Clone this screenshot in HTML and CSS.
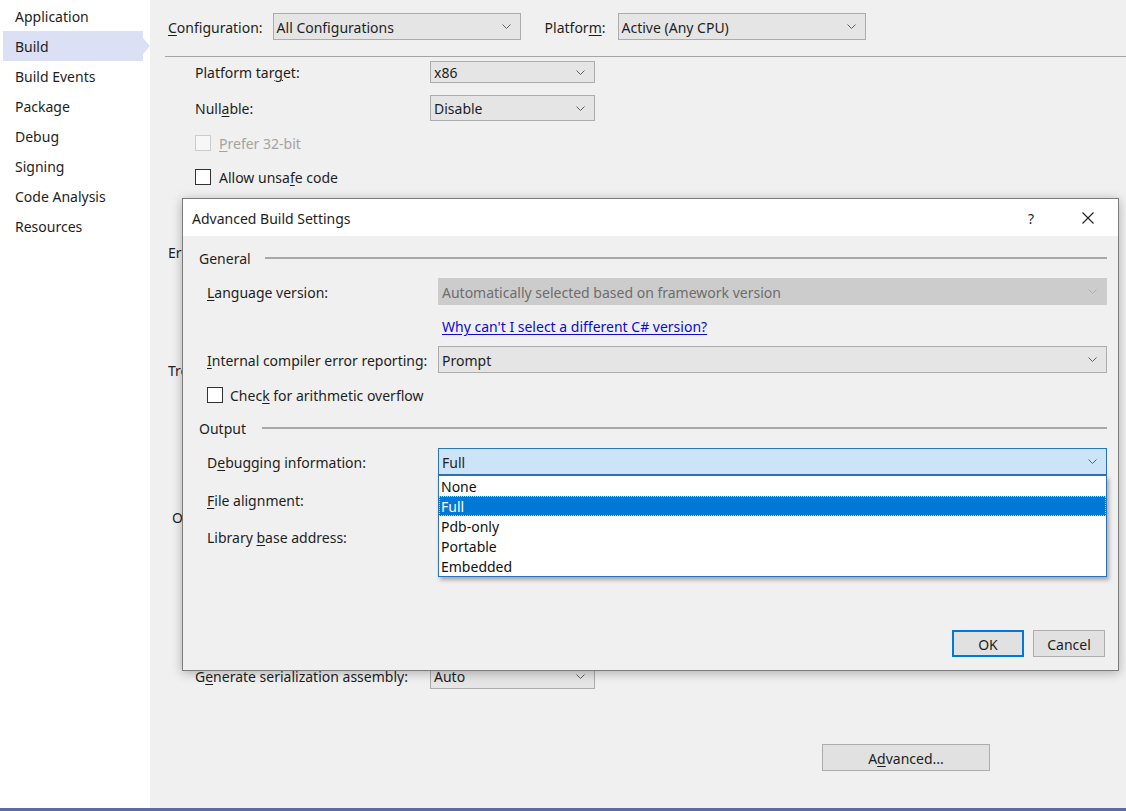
FILE: index.html
```html
<!DOCTYPE html>
<html>
<head>
<meta charset="utf-8">
<title>Build</title>
<link rel="stylesheet" href="styles.css">
</head>
<body>
<div class="app">
  <nav class="sidebar">
    <div class="nav-item">Application</div>
    <div class="nav-item active">Build</div>
    <div class="nav-item">Build Events</div>
    <div class="nav-item">Package</div>
    <div class="nav-item">Debug</div>
    <div class="nav-item">Signing</div>
    <div class="nav-item">Code Analysis</div>
    <div class="nav-item">Resources</div>
  </nav>

  <main class="main">
    <div class="config-bar">
      <span class="lbl txt"><u>C</u>onfiguration:</span>
      <div class="combo combo-config"><span class="combo-text txt">All Configurations</span><svg class="chev" width="9" height="5" viewBox="0 0 9 5"><polyline points="0.5,0.5 4.5,4.5 8.5,0.5"/></svg></div>
      <span class="lbl lbl-platform txt">Platfor<u>m</u>:</span>
      <div class="combo combo-platform"><span class="combo-text txt">Active (Any CPU)</span><svg class="chev" width="9" height="5" viewBox="0 0 9 5"><polyline points="0.5,0.5 4.5,4.5 8.5,0.5"/></svg></div>
    </div>
    <div class="rule"></div>

    <div class="settings">
      <div class="row row-target">
        <span class="row-label txt">Platform tar<u>g</u>et:</span>
        <div class="combo combo-small combo-short"><span class="combo-text txt">x86</span><svg class="chev" width="9" height="5" viewBox="0 0 9 5"><polyline points="0.5,0.5 4.5,4.5 8.5,0.5"/></svg></div>
      </div>
      <div class="row row-nullable">
        <span class="row-label txt">Null<u>a</u>ble:</span>
        <div class="combo combo-small"><span class="combo-text txt">Disable</span><svg class="chev" width="9" height="5" viewBox="0 0 9 5"><polyline points="0.5,0.5 4.5,4.5 8.5,0.5"/></svg></div>
      </div>
      <div class="row row-check disabled">
        <span class="checkbox"></span><span class="txt"><u>P</u>refer 32-bit</span>
      </div>
      <div class="row row-check">
        <span class="checkbox"></span><span class="txt">Allow unsa<u>f</u>e code</span>
      </div>
      <div class="row row-hidden1 section-head"><span class="clip txt">Er</span></div>
      <div class="row row-hidden2 section-head"><span class="clip txt">Tre</span></div>
      <div class="row row-hidden3 section-head out-head"><span class="clip clip-o txt">O</span></div>
      <div class="row row-serial">
        <span class="row-label txt">G<u>e</u>nerate serialization assembly:</span>
        <div class="combo combo-small"><span class="combo-text txt">Auto</span><svg class="chev" width="9" height="5" viewBox="0 0 9 5"><polyline points="0.5,0.5 4.5,4.5 8.5,0.5"/></svg></div>
      </div>
      <div class="row row-advanced">
        <div class="button btn-advanced"><span class="txt">A<u>d</u>vanced...</span></div>
      </div>
    </div>

    <div class="dialog">
      <div class="dlg-title">
        <span class="dlg-title-text txt">Advanced Build Settings</span>
        <span class="dlg-help txt">?</span>
        <svg class="dlg-close" width="12" height="12" viewBox="0 0 12 12"><line x1="0.5" y1="0.5" x2="11.5" y2="11.5"/><line x1="11.5" y1="0.5" x2="0.5" y2="11.5"/></svg>
      </div>
      <div class="dlg-body">
        <div class="group-head"><span class="txt">General</span><span class="group-line"></span></div>
        <div class="frow frow-lang">
          <span class="frow-label txt"><u>L</u>anguage version:</span>
          <div class="combo combo-wide combo-disabled"><span class="combo-text txt">Automatically selected based on framework version</span><svg class="chev" width="9" height="5" viewBox="0 0 9 5"><polyline points="0.5,0.5 4.5,4.5 8.5,0.5"/></svg></div>
        </div>
        <div class="frow frow-link">
          <span class="frow-label"></span>
          <a class="link txt" href="#">Why can't I select a different C# version?</a>
        </div>
        <div class="frow frow-internal">
          <span class="frow-label txt"><u>I</u>nternal compiler error reporting:</span>
          <div class="combo combo-wide"><span class="combo-text txt">Prompt</span><svg class="chev" width="9" height="5" viewBox="0 0 9 5"><polyline points="0.5,0.5 4.5,4.5 8.5,0.5"/></svg></div>
        </div>
        <div class="frow frow-check">
          <span class="checkbox"></span><span class="txt">Chec<u>k</u> for arithmetic overflow</span>
        </div>
        <div class="group-head group-output"><span class="txt">Output</span><span class="group-line"></span></div>
        <div class="frow frow-debug">
          <span class="frow-label txt">D<u>e</u>bugging information:</span>
          <div class="combo combo-wide combo-focus"><span class="combo-text txt">Full</span><svg class="chev" width="9" height="5" viewBox="0 0 9 5"><polyline points="0.5,0.5 4.5,4.5 8.5,0.5"/></svg>
            <ul class="droplist">
              <li>None</li>
              <li class="selected">Full</li>
              <li>Pdb-only</li>
              <li>Portable</li>
              <li>Embedded</li>
            </ul>
          </div>
        </div>
        <div class="frow frow-text">
          <span class="frow-label txt"><u>F</u>ile alignment:</span>
        </div>
        <div class="frow frow-text">
          <span class="frow-label txt">Library <u>b</u>ase address:</span>
        </div>
        <div class="dlg-buttons">
          <div class="button btn-ok"><span class="txt">OK</span></div>
          <div class="button btn-cancel"><span class="txt">Cancel</span></div>
        </div>
      </div>
    </div>
  </main>
</div>
<div class="status-bar"></div>
</body>
</html>
```

FILE: styles.css
```css
* { box-sizing: border-box; }
html, body { margin: 0; padding: 0; height: 100%; }
body {
  font-family: "Noto Sans", "Open Sans", sans-serif;
  font-size: 14px;
  color: #1e1e1e;
  background: #f0f0f0;
  overflow: hidden;
}
u { text-decoration: underline; text-underline-offset: 2px; text-decoration-thickness: 1px; }

/* nudges glyphs 1px lower inside flex-centred rows */
.txt { line-height: 20px; padding-top: 2px; }

.app { display: flex; height: 808px; }

/* Sidebar */
.sidebar {
  width: 150px;
  flex-shrink: 0;
  background: #ffffff;
  padding-top: 1px;
}
.nav-item {
  height: 30px;
  line-height: 32px;
  margin-left: 3px;
  width: 140px;
  padding-left: 12px;
  position: relative;
  white-space: nowrap;
}
.nav-item.active { background: #dce0f5; }
.nav-item.active::after {
  content: "";
  position: absolute;
  right: -7px;
  top: 7px;
  border-left: 7px solid #dce0f5;
  border-top: 8px solid transparent;
  border-bottom: 8px solid transparent;
}

/* Main */
.main {
  flex: 1;
  position: relative;
  background: #f0f0f0;
}
.config-bar {
  display: flex;
  align-items: center;
  padding: 13px 0 0 18px;
  height: 40px;
}
.lbl { white-space: nowrap; }
.lbl-platform { margin-left: 24px; }

.combo {
  position: relative;
  display: flex;
  align-items: center;
  justify-content: space-between;
  height: 27px;
  background: #e5e5e5;
  border: 1px solid #acacac;
  padding: 0 9px 0 3px;
  white-space: nowrap;
}
.chev { flex-shrink: 0; }
.chev polyline { fill: none; stroke: #606060; stroke-width: 1; }

.combo-config { width: 248px; margin-left: 10px; }
.combo-platform { width: 248px; margin-left: 12px; }

.rule {
  margin: 16px 0 0 15px;
  height: 1px;
  background: #a5a5a5;
}

.settings { padding-left: 45px; }
.row { display: flex; align-items: center; white-space: nowrap; }
.row-label { width: 235px; }
.combo-small { width: 165px; height: 26px; }
.combo-short { height: 22px; }
.row-target { margin-top: 4px; height: 22px; }
.row-nullable { margin-top: 12px; height: 26px; }
.row-check { height: 24px; margin-top: 10px; }
.row-check .checkbox { margin-right: 8px; }
.disabled { color: #a3a3a3; }
.disabled .checkbox { border-color: #cccccc; background: #f7f7f7; }
.section-head { margin-left: -27px; height: 24px; }
.clip { display: block; width: 14px; overflow: hidden; white-space: nowrap; }
.clip-o { width: 10px; }
.row-hidden1 { margin-top: 51px; }
.row-hidden2 { margin-top: 94px; }
.row-hidden3 { margin-top: 123px; }
.out-head { margin-left: -23px; }
.row-serial { margin-top: 134px; height: 26px; }
.row-advanced { margin-top: 55px; padding-left: 627px; }

.checkbox {
  display: inline-block;
  width: 16px;
  height: 16px;
  border: 1px solid #333333;
  background: #ffffff;
  flex-shrink: 0;
}

.button {
  height: 27px;
  display: flex;
  align-items: center;
  justify-content: center;
  background: #e1e1e1;
  border: 1px solid #adadad;
}
.btn-advanced { width: 168px; }

/* Dialog */
.dialog {
  position: absolute;
  left: 32px;
  top: 198px;
  width: 937px;
  height: 473px;
  border: 1px solid #7c7c7c;
  background: #f0f0f0;
  box-shadow: 0 2px 10px rgba(0, 0, 0, 0.28);
  display: flex;
  flex-direction: column;
}
.dlg-title {
  height: 37px;
  background: #ffffff;
  display: flex;
  align-items: center;
  padding-left: 9px;
}
.dlg-title-text { flex: 1; }
.dlg-help { width: 56px; text-align: left; padding-left: 2px; }
.dlg-close { margin-right: 24px; }
.dlg-close line { stroke: #1e1e1e; stroke-width: 1.1; }

.dlg-body {
  flex: 1;
  display: flex;
  flex-direction: column;
  padding: 12px 11px 13px 16px;
}
.group-head {
  display: flex;
  align-items: center;
  height: 20px;
}
.group-line {
  flex: 1;
  height: 2px;
  background: #a8a8a8;
  margin-left: 14px;
}
.group-output { margin-top: 13px; }
.group-output .group-line { margin-left: 16px; }

.frow {
  display: flex;
  align-items: center;
  padding-left: 8px;
  white-space: nowrap;
}
.frow-label { width: 231px; flex-shrink: 0; }
.combo-wide { flex: 1; }
.combo-disabled { background: #cccccc; border-color: #cccccc; color: #6d6d6d; }
.combo-disabled .chev polyline { stroke: #b0b0b0; }
.frow-lang { margin-top: 10px; }
.frow-link { margin-top: 11px; height: 20px; }
.frow-link .frow-label { width: 235px; }
.link { color: #0b0bd6; text-decoration: underline; text-underline-offset: 2px; }
.frow-internal { margin-top: 10px; }
.frow-check { margin-top: 12px; height: 20px; }
.frow-check .checkbox { margin-right: 7px; }
.frow-debug { margin-top: 10px; }
.frow-text { margin-top: 13px; height: 24px; }

.combo-focus { background: #cce4f7; border-color: #2a73b8; }
.droplist {
  position: absolute;
  left: -1px;
  right: -1px;
  top: 100%;
  margin: 1px 0 0 0;
  padding: 0;
  list-style: none;
  background: #ffffff;
  border: 1px solid #2a73b8;
  box-shadow: 2px 3px 4px rgba(0, 0, 0, 0.3);
  z-index: 2;
}
.droplist li {
  height: 20px;
  line-height: 22px;
  padding-left: 2px;
  color: #111111;
}
.droplist li.selected {
  background: #0078d7;
  color: #ffffff;
  outline: 1px dotted #b8d6f0;
  outline-offset: -1px;
}

.dlg-buttons {
  margin-top: auto;
  display: flex;
  justify-content: flex-end;
  gap: 9px;
  padding-right: 2px;
}
.dlg-buttons .button { width: 72px; }
.btn-ok { border: 2px solid #0078d7; }

.status-bar { height: 3px; background: #5e6b9d; }
```
